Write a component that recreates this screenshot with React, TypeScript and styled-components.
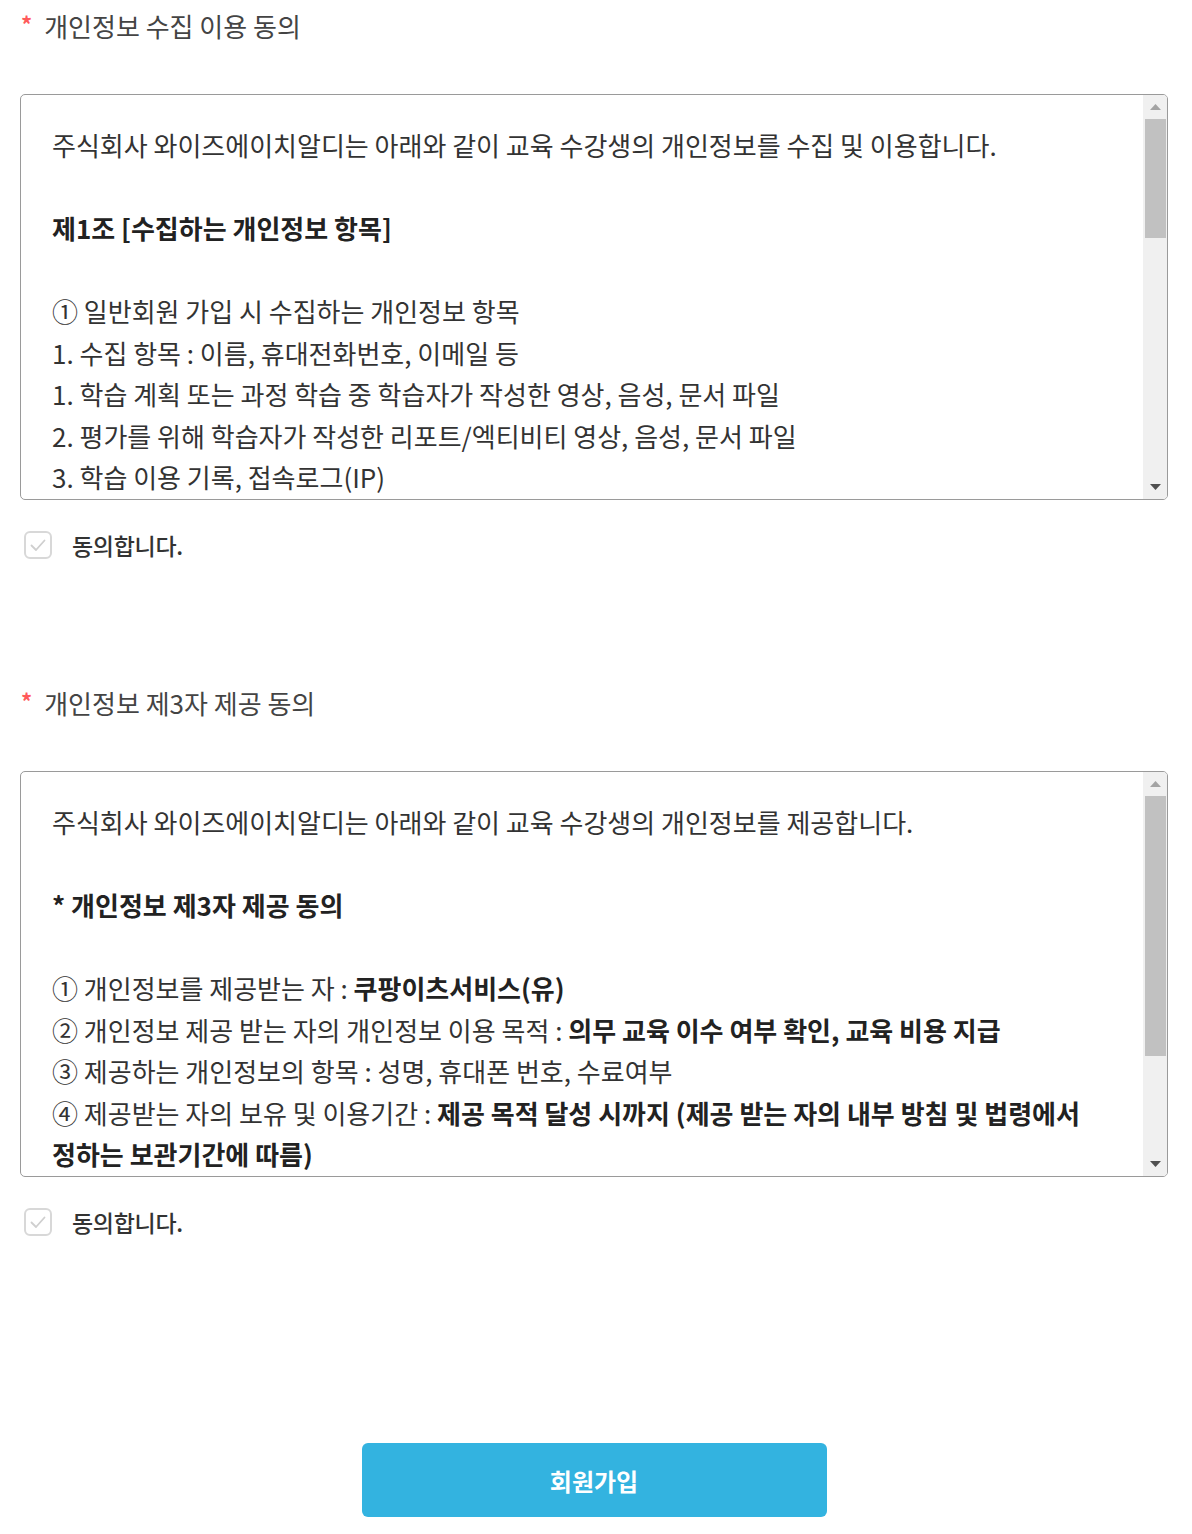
import React from 'react';
import styled, { createGlobalStyle } from 'styled-components';

const GlobalStyle = createGlobalStyle`
  * {
    box-sizing: border-box;
  }

  body {
    margin: 0;
    background: #ffffff;
    font-family: 'Noto Sans CJK KR', 'Noto Sans', sans-serif;
    color: #333333;
  }
`;

type Line = { text: string; strong?: string; bold?: boolean; blank?: boolean };

const COLLECT_TERMS: Line[] = [
  { text: '주식회사 와이즈에이치알디는 아래와 같이 교육 수강생의 개인정보를 수집 및 이용합니다.' },
  { text: '', blank: true },
  { text: '제1조 [수집하는 개인정보 항목]', bold: true },
  { text: '', blank: true },
  { text: '① 일반회원 가입 시 수집하는 개인정보 항목' },
  { text: '1. 수집 항목 : 이름, 휴대전화번호, 이메일 등' },
  { text: '1. 학습 계획 또는 과정 학습 중 학습자가 작성한 영상, 음성, 문서 파일' },
  { text: '2. 평가를 위해 학습자가 작성한 리포트/엑티비티 영상, 음성, 문서 파일' },
  { text: '3. 학습 이용 기록, 접속로그(IP)' },
];

const PROVIDE_TERMS: Line[] = [
  { text: '주식회사 와이즈에이치알디는 아래와 같이 교육 수강생의 개인정보를 제공합니다.' },
  { text: '', blank: true },
  { text: '* 개인정보 제3자 제공 동의', bold: true },
  { text: '', blank: true },
  { text: '① 개인정보를 제공받는 자 : ', strong: '쿠팡이츠서비스(유)' },
  { text: '② 개인정보 제공 받는 자의 개인정보 이용 목적 : ', strong: '의무 교육 이수 여부 확인, 교육 비용 지급' },
  { text: '③ 제공하는 개인정보의 항목 : 성명, 휴대폰 번호, 수료여부' },
  {
    text: '④ 제공받는 자의 보유 및 이용기간 : ',
    strong: '제공 목적 달성 시까지 (제공 받는 자의 내부 방침 및 법령에서 정하는 보관기간에 따름)',
  },
];

const CheckIcon = () => (
  <svg width="22" height="22" viewBox="0 0 22 22" fill="none">
    <path d="M4.5 11.5 L9 16 L17.5 6.5" stroke="#cfcfcf" strokeWidth="1.8" strokeLinecap="round" strokeLinejoin="round" />
  </svg>
);

const Arrow = ({ down }: { down?: boolean }) => (
  <svg width="11" height="6" viewBox="0 0 11 6">
    {down ? <polygon points="0,0 11,0 5.5,6" fill="#505050" /> : <polygon points="0,6 11,6 5.5,0" fill="#a3a3a3" />}
  </svg>
);

const TermsBox = ({ lines, thumb }: { lines: Line[]; thumb: number }) => (
  <Box>
    <Content>
      {lines.map((line, i) =>
        line.blank ? (
          <Para key={i}>&nbsp;</Para>
        ) : (
          <Para key={i} $bold={line.bold}>
            {line.text}
            {line.strong && <strong>{line.strong}</strong>}
          </Para>
        )
      )}
    </Content>
    <ScrollTrack>
      <ScrollButton>
        <Arrow />
      </ScrollButton>
      <Thumb $height={thumb} />
      <TrackSpace />
      <ScrollButton>
        <Arrow down />
      </ScrollButton>
    </ScrollTrack>
  </Box>
);

const AgreeRow = () => (
  <Agree>
    <CheckBox>
      <CheckIcon />
    </CheckBox>
    <AgreeLabel>동의합니다.</AgreeLabel>
  </Agree>
);

const App = () => (
  <>
    <GlobalStyle />
    <Page>
      <Section>
        <Title>
          <Required>*</Required>개인정보 수집 이용 동의
        </Title>
        <TermsBox lines={COLLECT_TERMS} thumb={119} />
        <AgreeRow />
      </Section>

      <Section $gap={118}>
        <Title>
          <Required>*</Required>개인정보 제3자 제공 동의
        </Title>
        <TermsBox lines={PROVIDE_TERMS} thumb={260} />
        <AgreeRow />
      </Section>

      <Footer>
        <SubmitButton type="button">회원가입</SubmitButton>
      </Footer>
    </Page>
  </>
);

const Page = styled.div`
  width: 1168px;
  padding: 0 0 16px 20px;
  display: flex;
  flex-direction: column;
`;

const Section = styled.section<{ $gap?: number }>`
  display: flex;
  flex-direction: column;
  margin-top: ${({ $gap }) => $gap ?? 0}px;
`;

const Title = styled.h2`
  display: flex;
  align-items: center;
  gap: 12px;
  height: 52px;
  margin: 0;
  font-size: 26px;
  font-weight: 400;
  line-height: 52px;
  color: #444444;
`;

const Required = styled.span`
  margin-left: 1px;
  margin-top: -6px;
  font-size: 22px;
  font-weight: 700;
  color: #ff5a5a;
`;

const Box = styled.div`
  display: flex;
  height: 406px;
  margin-top: 42px;
  border: 1px solid #9a9a9a;
  border-radius: 5px;
  overflow: hidden;
`;

const Content = styled.div`
  flex: 1;
  padding: 29px 22px 0 31px;
  overflow: hidden;
`;

const Para = styled.p<{ $bold?: boolean }>`
  margin: 0;
  font-size: 26px;
  line-height: 41.5px;
  font-weight: ${({ $bold }) => ($bold ? 700 : 400)};
  color: ${({ $bold }) => ($bold ? '#222222' : '#333333')};
  word-break: keep-all;

  strong {
    font-weight: 700;
    color: #222222;
  }
`;

const ScrollTrack = styled.div`
  width: 24px;
  flex-shrink: 0;
  display: flex;
  flex-direction: column;
  background: #f0f0f0;
`;

const ScrollButton = styled.div`
  height: 24px;
  display: flex;
  align-items: center;
  justify-content: center;
`;

const Thumb = styled.div<{ $height: number }>`
  height: ${({ $height }) => $height}px;
  margin: 0 1px 0 2px;
  background: #c1c1c1;
`;

const TrackSpace = styled.div`
  flex: 1;
`;

const Agree = styled.label`
  display: flex;
  align-items: center;
  gap: 20px;
  height: 28px;
  margin-top: 31px;
  padding-left: 4px;
  cursor: pointer;
`;

const CheckBox = styled.span`
  width: 28px;
  height: 28px;
  display: flex;
  align-items: center;
  justify-content: center;
  border: 2px solid #d8d8d8;
  border-radius: 6px;
  background: #ffffff;
`;

const AgreeLabel = styled.span`
  font-size: 23px;
  line-height: 28px;
  font-weight: 500;
  color: #333333;
  letter-spacing: -0.3px;
`;

const Footer = styled.div`
  display: flex;
  justify-content: center;
  margin-top: 207px;
`;

const SubmitButton = styled.button`
  width: 465px;
  height: 74px;
  border: none;
  border-radius: 6px;
  background: #33b3e0;
  color: #ffffff;
  font-family: 'Noto Sans CJK KR', 'Noto Sans', sans-serif;
  font-size: 24px;
  font-weight: 700;
  cursor: pointer;
`;

export default App;
